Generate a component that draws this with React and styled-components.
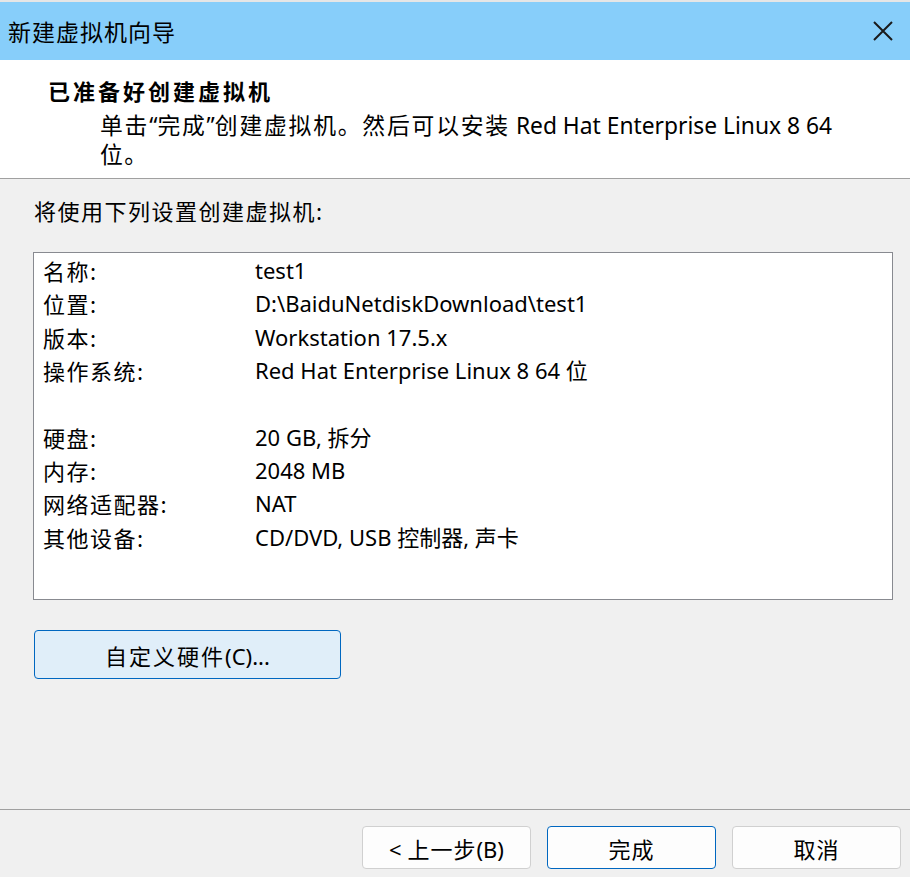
import React from 'react'
import styled, { createGlobalStyle } from 'styled-components'

const Global = createGlobalStyle`
  *, *::before, *::after {
    box-sizing: border-box;
  }
  html, body {
    margin: 0;
    padding: 0;
    background: #f0f0f0;
  }
  body {
    font-family: "Noto Sans", "Noto Sans CJK SC", sans-serif;
    color: #000;
  }
`

const Window = styled.div`
  width: 910px;
  height: 877px;
  display: flex;
  flex-direction: column;
  background: #f0f0f0;
  border-top: 2px solid #e6e6e6;
  overflow: hidden;
`

const TitleBar = styled.div`
  height: 58px;
  flex-shrink: 0;
  background: #87cefa;
  display: flex;
  align-items: center;
  justify-content: space-between;
  padding: 0 17px 0 8px;
  font-size: 23px;
  letter-spacing: 1px;
  font-family: "Noto Sans CJK SC", sans-serif;
`

const CloseBtn = styled.div`
  width: 20px;
  height: 20px;
  display: flex;
  align-items: center;
  justify-content: center;
`

const Header = styled.div`
  height: 119px;
  flex-shrink: 0;
  background: #fff;
  border-bottom: 1px solid #a0a0a0;
  padding: 15px 0 0 48px;
`

const Heading = styled.div`
  font-family: "Noto Sans CJK SC", sans-serif;
  font-weight: 700;
  font-size: 22px;
  letter-spacing: 3px;
  line-height: 30px;
`

const SubText = styled.div`
  margin: 6px 0 0 52px;
  font-size: 22.8px;
  line-height: 28px;
`

const Cjk = styled.span`
  font-family: "Noto Sans CJK SC", sans-serif;
  letter-spacing: ${p => p.$spacing || '1.5px'};
`

const Body = styled.div`
  flex: 1;
  padding: 14px 17px 0 33px;
  display: flex;
  flex-direction: column;
`

const Intro = styled.div`
  font-size: 22px;
  line-height: 34px;
  margin-left: 1px;
`

const ListBox = styled.div`
  margin-top: 24px;
  height: 348px;
  background: #fff;
  border: 1px solid #888a90;
  padding: 1px 0 0 9px;
  display: flex;
  flex-direction: column;
`

const Row = styled.div`
  display: grid;
  grid-template-columns: 212px 1fr;
  font-size: 22px;
  line-height: 33.4px;
  height: 33.4px;
  white-space: nowrap;
`

const Spacer = styled.div`
  height: 33px;
`

const CustomButton = styled.button`
  margin: 30px 0 0 1px;
  width: 307px;
  height: 49px;
  background: #e0eef9;
  border: 1px solid #0067c0;
  border-radius: 4px;
  font-family: "Noto Sans", "Noto Sans CJK SC", sans-serif;
  font-size: 22px;
  color: #000;
  padding: 0;
`

const Footer = styled.div`
  height: 68px;
  flex-shrink: 0;
  border-top: 1px solid #a0a0a0;
  display: flex;
  justify-content: flex-end;
  align-items: flex-start;
  gap: 16px;
  padding: 16px 9px 0 0;
`

const FooterButton = styled.button`
  width: 169px;
  height: 43px;
  background: #fdfdfd;
  border: 1px solid ${p => (p.$primary ? '#0067c0' : '#d0d0d0')};
  border-radius: 4px;
  font-family: "Noto Sans", "Noto Sans CJK SC", sans-serif;
  font-size: 22px;
  color: #000;
  padding: 0;
`

const rows = [
  ['名称:', 'test1'],
  ['位置:', 'D:\\BaiduNetdiskDownload\\test1'],
  ['版本:', 'Workstation 17.5.x'],
  ['操作系统:', 'Red Hat Enterprise Linux 8 64 位'],
  null,
  ['硬盘:', '20 GB, 拆分'],
  ['内存:', '2048 MB'],
  ['网络适配器:', 'NAT'],
  ['其他设备:', 'CD/DVD, USB 控制器, 声卡'],
]

export default function App() {
  return (
    <Window>
      <Global />
      <TitleBar>
        <span>新建虚拟机向导</span>
        <CloseBtn>
          <svg width="20" height="20" viewBox="0 0 20 20">
            <path d="M1 1 L19 19 M19 1 L1 19" stroke="#1a1a1a" strokeWidth="2" fill="none" />
          </svg>
        </CloseBtn>
      </TitleBar>
      <Header>
        <Heading>已准备好创建虚拟机</Heading>
        <SubText>
          <Cjk $spacing="1.8px">单击</Cjk>“<Cjk $spacing="1.8px">完成</Cjk>”
          <Cjk $spacing="1.8px">创建虚拟机。然后可以安装</Cjk> Red Hat Enterprise Linux 8 64
          <br />
          <Cjk>位。</Cjk>
        </SubText>
      </Header>
      <Body>
        <Intro>
          <Cjk>将使用下列设置创建虚拟机:</Cjk>
        </Intro>
        <ListBox>
          {rows.map((r, i) =>
            r ? (
              <Row key={i}>
                <Cjk>{r[0]}</Cjk>
                <span>{r[1]}</span>
              </Row>
            ) : (
              <Spacer key={i} />
            )
          )}
        </ListBox>
        <div>
          <CustomButton>
            <Cjk $spacing="2px">自定义硬件</Cjk>(C)...
          </CustomButton>
        </div>
      </Body>
      <Footer>
        <FooterButton>
          &lt; <Cjk $spacing="1px">上一步</Cjk>(B)
        </FooterButton>
        <FooterButton $primary>
          <Cjk $spacing="1px">完成</Cjk>
        </FooterButton>
        <FooterButton>
          <Cjk $spacing="1px">取消</Cjk>
        </FooterButton>
      </Footer>
    </Window>
  )
}
